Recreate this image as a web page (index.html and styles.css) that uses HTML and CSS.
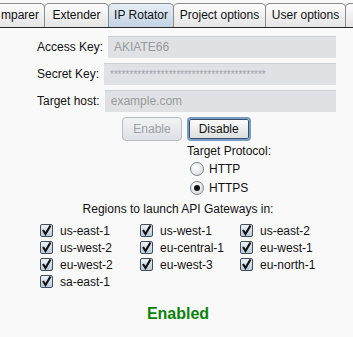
FILE: index.html
```html
<!DOCTYPE html>
<html>
<head>
<meta charset="utf-8">
<link rel="stylesheet" href="styles.css">
</head>
<body>
<div class="tabs">
  <div class="tab first">mparer</div>
  <div class="tab w-ext">Extender</div>
  <div class="tab active w-ip">IP Rotator</div>
  <div class="tab w-proj">Project options</div>
  <div class="tab w-user">User options</div>
  <div class="tab last"></div>
</div>
<div class="content">
  <div class="form">
    <div class="row"><span class="label">Access Key:</span><div class="field">AKIATE66</div></div>
    <div class="row"><span class="label">Secret Key:</span><div class="field stars">****************************************</div></div>
    <div class="row"><span class="label">Target host:</span><div class="field">example.com</div></div>
    <div class="buttons">
      <div class="btn disabled">Enable</div>
      <div class="btn focus">Disable</div>
    </div>
  </div>
  <div class="protocol">
    <div class="ptitle">Target Protocol:</div>
    <div class="radio-row"><span class="radio"></span><span>HTTP</span></div>
    <div class="radio-row"><span class="radio on"></span><span>HTTPS</span></div>
  </div>
  <div class="regions-title">Regions to launch API Gateways in:</div>
  <div class="grid">
    <div class="cb"><span class="box"><svg viewBox="0 0 13 13" width="13" height="13"><path d="M3 6 L5.5 10 L10.5 1.5" fill="none" stroke="#111" stroke-width="2.2"/></svg></span>us-east-1</div>
    <div class="cb"><span class="box"><svg viewBox="0 0 13 13" width="13" height="13"><path d="M3 6 L5.5 10 L10.5 1.5" fill="none" stroke="#111" stroke-width="2.2"/></svg></span>us-west-1</div>
    <div class="cb"><span class="box"><svg viewBox="0 0 13 13" width="13" height="13"><path d="M3 6 L5.5 10 L10.5 1.5" fill="none" stroke="#111" stroke-width="2.2"/></svg></span>us-east-2</div>
    <div class="cb"><span class="box"><svg viewBox="0 0 13 13" width="13" height="13"><path d="M3 6 L5.5 10 L10.5 1.5" fill="none" stroke="#111" stroke-width="2.2"/></svg></span>us-west-2</div>
    <div class="cb"><span class="box"><svg viewBox="0 0 13 13" width="13" height="13"><path d="M3 6 L5.5 10 L10.5 1.5" fill="none" stroke="#111" stroke-width="2.2"/></svg></span>eu-central-1</div>
    <div class="cb"><span class="box"><svg viewBox="0 0 13 13" width="13" height="13"><path d="M3 6 L5.5 10 L10.5 1.5" fill="none" stroke="#111" stroke-width="2.2"/></svg></span>eu-west-1</div>
    <div class="cb"><span class="box"><svg viewBox="0 0 13 13" width="13" height="13"><path d="M3 6 L5.5 10 L10.5 1.5" fill="none" stroke="#111" stroke-width="2.2"/></svg></span>eu-west-2</div>
    <div class="cb"><span class="box"><svg viewBox="0 0 13 13" width="13" height="13"><path d="M3 6 L5.5 10 L10.5 1.5" fill="none" stroke="#111" stroke-width="2.2"/></svg></span>eu-west-3</div>
    <div class="cb"><span class="box"><svg viewBox="0 0 13 13" width="13" height="13"><path d="M3 6 L5.5 10 L10.5 1.5" fill="none" stroke="#111" stroke-width="2.2"/></svg></span>eu-north-1</div>
    <div class="cb"><span class="box"><svg viewBox="0 0 13 13" width="13" height="13"><path d="M3 6 L5.5 10 L10.5 1.5" fill="none" stroke="#111" stroke-width="2.2"/></svg></span>sa-east-1</div>
  </div>
  <div class="status">Enabled</div>
</div>
</body>
</html>
```
FILE: styles.css
```css
html, body {
  margin: 0;
  padding: 0;
  background: #f9f9f9;
  font-family: "Liberation Sans", Arial, sans-serif;
  font-size: 12px;
  color: #111;
  overflow: hidden;
}
.tabs {
  display: flex;
  height: 24px;
  padding-top: 3px;
  border-bottom: 1px solid #2a2a2a;
  white-space: nowrap;
}
.tab {
  box-sizing: border-box;
  height: 24px;
  line-height: 23px;
  text-align: center;
  border: 1px solid #8c8c8c;
  border-bottom: none;
  border-radius: 5px 5px 0 0;
  margin-right: -1px;
  background: linear-gradient(#fdfdfd, #e4e4e4);
  flex-shrink: 0;
}
.tab.first {
  width: 45px;
  border-left: none;
  border-radius: 0 5px 0 0;
  text-align: left;
  padding-left: 1px;
}
.w-ext { width: 65px; }
.w-ip { width: 66px; }
.w-proj { width: 93px; }
.w-user { width: 81px; }
.tab.last { width: 20px; }
.tab.active {
  background: linear-gradient(#e6eef6, #c3d3e3);
}
.content {
  display: flex;
  flex-direction: column;
}
.form {
  padding: 8px 17px 0 37px;
  display: flex;
  flex-direction: column;
  gap: 5px;
}
.row {
  display: flex;
  align-items: center;
  height: 22px;
}
.label {
  margin-right: 5px;
  white-space: nowrap;
}
.field {
  flex: 1;
  box-sizing: border-box;
  height: 22px;
  background: #dfe1e5;
  border-top: 1px solid #cdd0d4;
  color: #9a9a9a;
  padding-left: 6px;
  line-height: 21px;
}
.field.stars {
  font-size: 10px;
  letter-spacing: 0;
  color: #a0a4ac;
  overflow: hidden;
  white-space: nowrap;
}
.buttons {
  display: flex;
  justify-content: center;
  gap: 5px;
}
.btn {
  box-sizing: border-box;
  height: 24px;
  line-height: 22px;
  padding: 0 10px;
  border-radius: 4px;
  border: 1px solid #8a8a8a;
  background: linear-gradient(#fefefe, #dcdcdc);
}
.btn.disabled {
  color: #9aa0a6;
  border-color: #b8bcc2;
  background: linear-gradient(#f2f3f5, #dde0e4);
}
.btn.focus {
  border: 2px solid #7a9bc4;
  line-height: 20px;
  padding: 0 10px;
  box-shadow: inset 0 0 0 1px #3a5170;
}
.protocol {
  padding-left: 187px;
  margin-top: 3px;
}
.ptitle {
  height: 15px;
  line-height: 15px;
}
.radio-row {
  display: flex;
  align-items: center;
  height: 19px;
  padding-left: 3px;
  gap: 5px;
}
.radio {
  box-sizing: border-box;
  width: 14px;
  height: 14px;
  border-radius: 50%;
  border: 1px solid #7f8790;
  background: radial-gradient(circle at 40% 35%, #ffffff, #d0d4d8);
  display: flex;
  align-items: center;
  justify-content: center;
}
.radio.on::after {
  content: "";
  width: 6px;
  height: 6px;
  border-radius: 50%;
  background: #111;
}
.regions-title {
  text-align: center;
  margin-top: 4px;
  height: 16px;
  line-height: 16px;
  padding-left: 3px;
}
.grid {
  display: grid;
  grid-template-columns: 100px 100px 100px;
  grid-auto-rows: 17px;
  padding-left: 40px;
  margin-top: 5px;
}
.cb {
  display: flex;
  align-items: center;
  gap: 7px;
}
.box {
  box-sizing: border-box;
  width: 13px;
  height: 13px;
  border: 1px solid #3f4d5c;
  border-radius: 2px;
  background: linear-gradient(#eef2f6, #bccad8);
  display: flex;
}
.box svg {
  margin: -1px;
}
.status {
  text-align: center;
  font-weight: bold;
  font-size: 16px;
  color: #0a820a;
  margin-top: 15px;
  padding-left: 3px;
}
```
